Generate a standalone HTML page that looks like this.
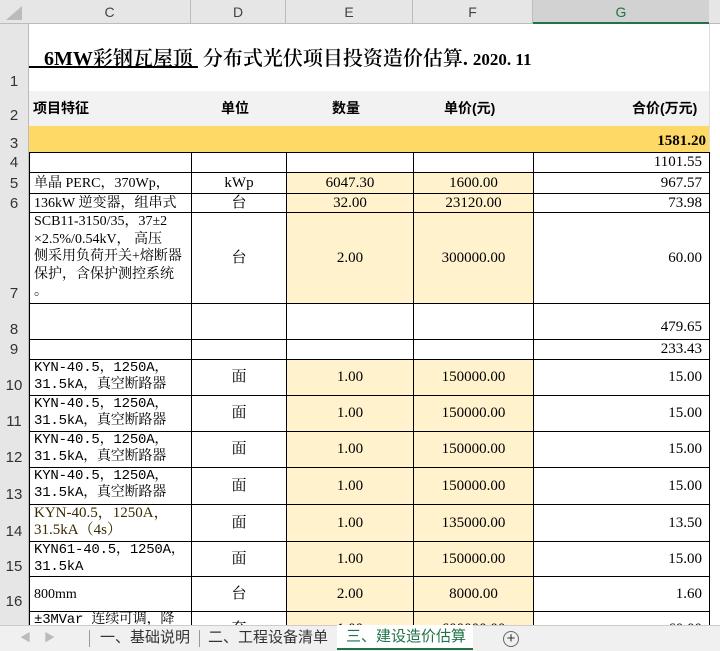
<!DOCTYPE html>
<html><head><meta charset="utf-8"><style>
*{margin:0;padding:0;box-sizing:border-box}
body{width:720px;height:651px;overflow:hidden;background:#fff;position:relative;font-family:"Liberation Serif","Noto Serif CJK SC",serif;font-size:14px;color:#000}
.a{position:absolute}
.hdr{background:#e6e6e6;color:#333;font-family:"Liberation Sans","Noto Sans CJK SC",sans-serif;font-size:14px}
table{position:absolute;left:29px;top:152px;border-collapse:collapse;table-layout:fixed}
td{padding:0 4px;overflow:hidden;white-space:nowrap;line-height:17px;font-size:15px;border:1px solid #000}
.c{text-align:center}.r{text-align:right;padding-right:7px}
.y{background:#fff2cc}
.w{vertical-align:top;padding-top:0;font-family:"Liberation Mono","Noto Serif CJK SC",monospace;font-size:14px;line-height:17px;letter-spacing:-0.2px}
.rn{position:absolute;left:0;width:28px;text-align:center;font-family:"Liberation Sans",sans-serif;font-size:15px;color:#333;line-height:17px}
</style></head><body>
<div class="a hdr" style="left:0;top:0;width:720px;height:24px;border-bottom:1px solid #bbb"></div>
<div class="a" style="left:29px;top:0;width:162px;height:24px;text-align:center;line-height:24px;font-family:'Liberation Sans';color:#444;border-right:1px solid #bbb">C</div>
<div class="a" style="left:191px;top:0;width:95px;height:24px;text-align:center;line-height:24px;font-family:'Liberation Sans';color:#444;border-right:1px solid #bbb">D</div>
<div class="a" style="left:286px;top:0;width:127px;height:24px;text-align:center;line-height:24px;font-family:'Liberation Sans';color:#444;border-right:1px solid #bbb">E</div>
<div class="a" style="left:413px;top:0;width:120px;height:24px;text-align:center;line-height:24px;font-family:'Liberation Sans';color:#444;border-right:1px solid #bbb">F</div>
<div class="a" style="left:533px;top:0;width:176px;height:24px;text-align:center;line-height:24px;font-family:'Liberation Sans';color:#217346;background:#d2d2d2;border-bottom:2px solid #217346">G</div>
<div class="a hdr" style="left:0;top:24px;width:29px;height:601px;border-right:1px solid #bbb"></div>
<div class="a" style="left:6px;top:6px;width:0;height:0;border-left:16px solid transparent;border-bottom:14px solid #bbb"></div>
<div class="a" style="left:709px;top:24px;width:11px;height:601px;background:#fff;border-left:1px solid #ddd"></div>

<div class="rn" style="top:73px">1</div>
<div class="rn" style="top:107px">2</div>
<div class="rn" style="top:135px">3</div>
<div class="rn" style="top:154px">4</div>
<div class="rn" style="top:175px">5</div>
<div class="rn" style="top:195px">6</div>
<div class="rn" style="top:285px">7</div>
<div class="rn" style="top:321px">8</div>
<div class="rn" style="top:341px">9</div>
<div class="rn" style="top:377px">10</div>
<div class="rn" style="top:413px">11</div>
<div class="rn" style="top:449px">12</div>
<div class="rn" style="top:486px">13</div>
<div class="rn" style="top:523px">14</div>
<div class="rn" style="top:558px">15</div>
<div class="rn" style="top:593px">16</div>

<div class="a" style="left:29px;top:47px;font-size:20px;font-weight:600;white-space:nowrap;line-height:24px"><span style="text-decoration:underline">&nbsp;&nbsp;&nbsp;6MW彩钢瓦屋顶&nbsp;</span> 分布式光伏项目投资造价估算. <span style="font-size:17px">2020. 11</span></div>
<div class="a" style="left:29px;top:91px;width:680px;height:35px;background:#f2f2f2;font-family:'Liberation Sans','Noto Sans CJK SC',sans-serif;font-weight:bold;font-size:14px;line-height:35px">
<span class="a" style="left:4px">项目特征</span><span class="a" style="left:192px">单位</span><span class="a" style="left:303px">数量</span><span class="a" style="left:415px">单价(元)</span><span class="a" style="left:603px">合价(万元)</span></div>
<div class="a" style="left:29px;top:126px;width:680px;height:26px;background:#ffd966;font-weight:bold;text-align:right;padding-right:3px;line-height:30px;font-size:15px">1581.20</div>

<table>
<colgroup><col style="width:162px"><col style="width:95px"><col style="width:127px"><col style="width:120px"><col style="width:176px"></colgroup>
<tr style="height:20px"><td></td><td></td><td></td><td></td><td class="r">1101.55</td></tr>
<tr style="height:21px"><td style="font-size:14px">单晶 PERC，370Wp，</td><td class="c">kWp</td><td class="c y">6047.30</td><td class="c y">1600.00</td><td class="r">967.57</td></tr>
<tr style="height:19px"><td style="font-size:14px">136kW 逆变器，组串式</td><td class="c">台</td><td class="c y">32.00</td><td class="c y">23120.00</td><td class="r">73.98</td></tr>
<tr style="height:91px"><td style="vertical-align:top;line-height:17.5px;font-size:14px">SCB11-3150/35，37±2<br>×2.5%/0.54kV， 高压<br>侧采用负荷开关+熔断器<br>保护，含保护测控系统<br>。</td><td class="c">台</td><td class="c y">2.00</td><td class="c y">300000.00</td><td class="r">60.00</td></tr>
<tr style="height:36px"><td></td><td></td><td></td><td></td><td class="r" style="padding-top:12px">479.65</td></tr>
<tr style="height:20px"><td></td><td></td><td></td><td></td><td class="r">233.43</td></tr>
<tr style="height:36px"><td class="w">KYN-40.5，1250A，<br>31.5kA，真空断路器</td><td class="c">面</td><td class="c y">1.00</td><td class="c y">150000.00</td><td class="r">15.00</td></tr>
<tr style="height:36px"><td class="w">KYN-40.5，1250A，<br>31.5kA，真空断路器</td><td class="c">面</td><td class="c y">1.00</td><td class="c y">150000.00</td><td class="r">15.00</td></tr>
<tr style="height:36px"><td class="w">KYN-40.5，1250A，<br>31.5kA，真空断路器</td><td class="c">面</td><td class="c y">1.00</td><td class="c y">150000.00</td><td class="r">15.00</td></tr>
<tr style="height:37px"><td class="w">KYN-40.5，1250A，<br>31.5kA，真空断路器</td><td class="c">面</td><td class="c y">1.00</td><td class="c y">150000.00</td><td class="r">15.00</td></tr>
<tr style="height:37px"><td class="w" style="font-family:'Liberation Serif','Noto Serif CJK SC',serif;font-size:15px;letter-spacing:0;color:#3a2a00">KYN-40.5，1250A，<br>31.5kA（4s）</td><td class="c">面</td><td class="c y">1.00</td><td class="c y">135000.00</td><td class="r">13.50</td></tr>
<tr style="height:35px"><td class="w">KYN61-40.5，1250A，<br>31.5kA</td><td class="c">面</td><td class="c y">1.00</td><td class="c y">150000.00</td><td class="r">15.00</td></tr>
<tr style="height:35px"><td style="font-size:14px">800mm</td><td class="c">台</td><td class="c y">2.00</td><td class="c y">8000.00</td><td class="r">1.60</td></tr>
<tr style="height:36px"><td class="w">±3MVar 连续可调，降</td><td class="c">套</td><td class="c y">1.00</td><td class="c y">600000.00</td><td class="r">60.00</td></tr>
</table>

<div class="a" style="left:0;top:625px;width:720px;height:26px;background:#f0f0f0;border-top:1px solid #ccc;font-family:'Liberation Sans','Noto Sans CJK SC',sans-serif;font-size:15px;color:#333;line-height:24px;white-space:nowrap">
<span class="a" style="left:20px;color:#bbb;font-size:11px">◀</span><span class="a" style="left:44px;color:#bbb;font-size:11px">▶</span>
<span class="a" style="left:89px;top:4px;height:17px;border-left:1px solid #999"></span>
<span class="a" style="left:100px">一、基础说明</span>
<span class="a" style="left:199px;top:4px;height:17px;border-left:1px solid #999"></span>
<span class="a" style="left:208px">二、工程设备清单</span>
<span class="a" style="left:337px;top:-1px;width:136px;height:25px;background:#fff;color:#217346;padding-left:9px;border-bottom:2px solid #217346">三、建设造价估算</span>
<span class="a" style="left:503px;top:5px;width:16px;height:16px;border:1px solid #666;border-radius:50%;text-align:center;line-height:13px;font-size:15px">+</span>
</div>
</body></html>
